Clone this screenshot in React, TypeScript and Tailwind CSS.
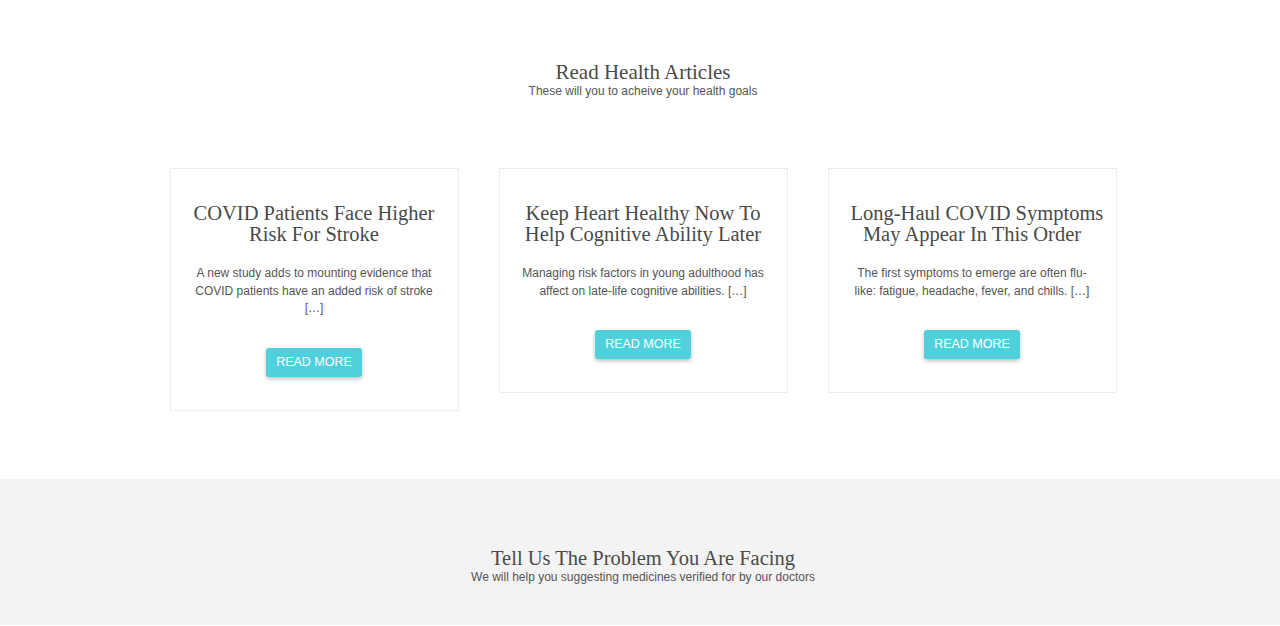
import React from "react";

const cards = [
  {
    title: ["COVID Patients Face Higher", "Risk For Stroke"],
    desc: "A new study adds to mounting evidence that COVID patients have an added risk of stroke […]",
  },
  {
    title: ["Keep Heart Healthy Now To", "Help Cognitive Ability Later"],
    desc: "Managing risk factors in young adulthood has affect on late-life cognitive abilities. […]",
  },
  {
    title: ["Long-Haul COVID Symptoms", "May Appear In This Order"],
    desc: "The first symptoms to emerge are often flu-like: fatigue, headache, fever, and chills. […]",
  },
];

export default function App() {
  return (
    <div className="min-h-[626px] bg-white font-['Liberation_Sans',Arial,sans-serif]">
      <section className="pl-[6px] pt-[61px] pb-[68px]">
        <div className="text-center">
          <h2 className="text-[21px] leading-[22px] text-[#4a4a4a] font-['Liberation_Serif',Georgia,serif]">
            Read Health Articles
          </h2>
          <p className="mt-[1px] text-[12px] leading-[15px] text-[#555]">
            These will you to acheive your health goals
          </p>
        </div>
        <div className="flex justify-center items-start gap-[40px] mt-[69px]">
          {cards.map((c, i) => (
            <div
              key={i}
              className="w-[289px] border border-[#ececec] bg-white px-[22px] pt-[34px] pb-[33px] text-center"
            >
              <h3 className="text-[20.5px] leading-[21px] text-[#4a4a4a] font-['Liberation_Serif',Georgia,serif]">
                <span className="block whitespace-nowrap">{c.title[0]}</span>
                <span className="block whitespace-nowrap">{c.title[1]}</span>
              </h3>
              <p className="mt-[20px] text-[12px] leading-[17.5px] text-[#555]">{c.desc}</p>
              <button className="mt-[30px] h-[29px] px-[10px] rounded-[3px] bg-[#4fd0dc] text-white text-[12.5px] shadow-[0_2px_4px_rgba(0,0,0,0.25)]">
                READ MORE
              </button>
            </div>
          ))}
        </div>
      </section>
      <section className="bg-[#f3f3f3] pl-[6px] pt-[68px] pb-[40px] text-center">
        <h2 className="text-[20.5px] leading-[22px] text-[#4a4a4a] font-['Liberation_Serif',Georgia,serif]">
          Tell Us The Problem You Are Facing
        </h2>
        <p className="mt-[1px] text-[12px] leading-[15px] text-[#555]">
          We will help you suggesting medicines verified for by our doctors
        </p>
      </section>
    </div>
  );
}
